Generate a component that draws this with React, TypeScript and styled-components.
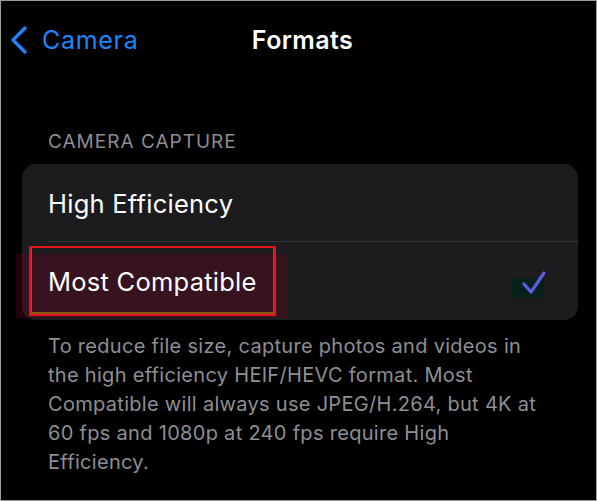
import React from "react";
import styled, { createGlobalStyle } from "styled-components";

const Global = createGlobalStyle`
  html, body { margin: 0; padding: 0; background: #000; }
  * { box-sizing: border-box; }
`;

const Screen = styled.div`
  width: 597px;
  height: 501px;
  background: #000;
  border: 1px solid #9d9d9d;
  font-family: Inter, "Noto Sans", sans-serif;
  overflow: hidden;
  display: flex;
  flex-direction: column;
`;

const NavBar = styled.div`
  height: 80px;
  display: grid;
  grid-template-columns: 1fr auto 1fr;
  align-items: center;
  padding: 0 0 0 8px;
  margin-top: -1px;
`;

const BackButton = styled.div`
  display: flex;
  align-items: center;
  gap: 13px;
  color: #1b86fb;
  font-size: 25px;
  letter-spacing: 0.7px;
`;

const Title = styled.div`
  color: #fff;
  font-size: 25px;
  font-weight: 600;
  letter-spacing: 0.4px;
`;

const Content = styled.div`
  padding: 0 18px 0 21px;
  display: flex;
  flex-direction: column;
`;

const SectionHeader = styled.div`
  color: #8d8d92;
  font-size: 19px;
  letter-spacing: 1px;
  text-transform: uppercase;
  padding: 50px 0 0 26px;
  line-height: 24px;
  height: 84px;
`;

const Card = styled.div`
  background: #1c1c1e;
  border-radius: 14px;
  display: flex;
  flex-direction: column;
`;

const Row = styled.div<{ $divider?: boolean }>`
  position: relative;
  height: 78px;
  display: flex;
  align-items: center;
  justify-content: space-between;
  padding: 0 31px 0 26px;
  color: #fff;
  font-size: 25.5px;
  letter-spacing: 0.25px;
  ${(p) =>
    p.$divider
      ? "&::after { content: ''; position: absolute; left: 26px; right: 0; bottom: 0; height: 1px; background: #353537; }"
      : ""}
`;

const Label = styled.span`
  position: relative;
  z-index: 2;
`;

const Highlight = styled.div`
  position: absolute;
  left: -6px;
  top: 12px;
  width: 272px;
  height: 64px;
  background: rgba(110, 0, 30, 0.32);
  z-index: 1;
`;

const RedBox = styled.div`
  position: absolute;
  left: 7px;
  top: 4px;
  width: 247px;
  height: 70px;
  border: 2px solid #e0121b;
  box-shadow: inset 1px -2px 0 #8a5a14, inset -1px 0 0 #8a5a14;
  z-index: 3;
`;

const CheckWrap = styled.div`
  position: relative;
  width: 26px;
  height: 25px;
  margin-top: 2px;
  z-index: 2;
  &::before {
    content: "";
    position: absolute;
    left: -9px;
    top: 8px;
    width: 32px;
    height: 19px;
    background: #06211b;
    z-index: -1;
  }
`;

const Footer = styled.div`
  color: #8e8e93;
  font-size: 20px;
  line-height: 29px;
  padding: 12px 0 0 26px;
  letter-spacing: 0.3px;
`;

export default function App() {
  return (
    <>
      <Global />
      <Screen>
        <NavBar>
          <BackButton>
            <svg width="20" height="30" viewBox="0 0 20 30">
              <polyline
                points="16,3 4,15 16,27"
                fill="none"
                stroke="#1b86fb"
                strokeWidth="3.4"
                strokeLinecap="round"
                strokeLinejoin="round"
              />
            </svg>
            Camera
          </BackButton>
          <Title>Formats</Title>
          <div />
        </NavBar>
        <Content>
          <SectionHeader>Camera Capture</SectionHeader>
          <Card>
            <Row $divider>
              <Label>High Efficiency</Label>
            </Row>
            <Row>
              <Highlight />
              <RedBox />
              <Label>Most Compatible</Label>
              <CheckWrap>
                <svg width="26" height="25" viewBox="0 0 26 25">
                  <polyline
                    points="3,14 10,22 23,3"
                    fill="none"
                    stroke="#5e5ce6"
                    strokeWidth="3.2"
                    strokeLinecap="round"
                    strokeLinejoin="round"
                  />
                </svg>
              </CheckWrap>
            </Row>
          </Card>
          <Footer>
            To reduce file size, capture photos and videos in
            <br />
            the high efficiency HEIF/HEVC format. Most
            <br />
            Compatible will always use JPEG/H.264, but 4K at
            <br />
            60 fps and 1080p at 240 fps require High
            <br />
            Efficiency.
          </Footer>
        </Content>
      </Screen>
    </>
  );
}
